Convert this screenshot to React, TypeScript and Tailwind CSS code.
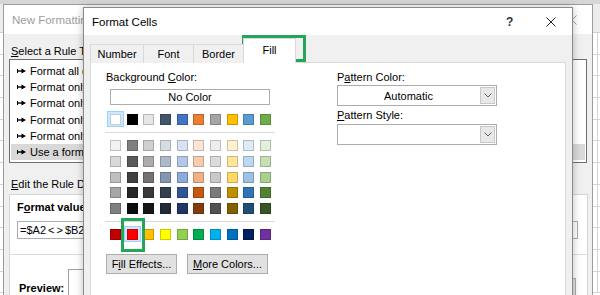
import React from 'react';

const topRow = ['#FFFFFF', '#000000', '#E7E6E6', '#44546A', '#4472C4', '#ED7D31', '#A5A5A5', '#FFC000', '#5B9BD5', '#70AD47'];

const tintRows = [
  ['#F2F2F2', '#808080', '#D0CECE', '#D6DCE4', '#D9E1F2', '#FCE4D6', '#EDEDED', '#FFF2CC', '#DDEBF7', '#E2EFDA'],
  ['#D9D9D9', '#595959', '#AEAAAA', '#ACB9CA', '#B4C6E7', '#F8CBAD', '#DBDBDB', '#FFE699', '#BDD7EE', '#C6E0B4'],
  ['#BFBFBF', '#404040', '#757171', '#8497B0', '#8EA9DB', '#F4B084', '#C9C9C9', '#FFD966', '#9BC2E6', '#A9D08E'],
  ['#A6A6A6', '#262626', '#3A3838', '#333F4F', '#305496', '#C65911', '#7B7B7B', '#BF8F00', '#2F75B5', '#548235'],
  ['#808080', '#0D0D0D', '#171616', '#222B35', '#203764', '#833C0C', '#525252', '#806000', '#1F4E78', '#375623'],
];

const standardRow = ['#C00000', '#FF0000', '#FFC000', '#FFFF00', '#92D050', '#00B050', '#00B0F0', '#0070C0', '#002060', '#7030A0'];

const ruleTypes = [
  'Format all cells based on their values',
  'Format only cells that contain',
  'Format only top or bottom ranked values',
  'Format only values that are above or below average',
  'Format only unique or duplicate values',
  'Use a formula to determine which cells to format',
];

function Swatch({ color, selected }: { color: string; selected?: boolean }) {
  return (
    <div className="relative w-[11px] h-[11px]">
      {selected && <div className="absolute -left-[3px] -top-[3px] w-[17px] h-[16px] bg-[#cce8ff] border border-[#99d1ff]" />}
      <div className="relative w-[11px] h-[11px] border border-black/20" style={{ backgroundColor: color }} />
    </div>
  );
}

function SwatchRow({ colors, selectedIndex }: { colors: string[]; selectedIndex?: number }) {
  return (
    <div className="flex gap-[5.67px]">
      {colors.map((c, i) => (
        <Swatch key={i} color={c} selected={i === selectedIndex} />
      ))}
    </div>
  );
}

function Chevron() {
  return (
    <svg width="8" height="5" viewBox="0 0 8 5" fill="none">
      <path d="M0.5 0.5 L4 4 L7.5 0.5" stroke="#606060" strokeWidth="1" />
    </svg>
  );
}

function Dropdown({ value }: { value?: string }) {
  return (
    <div className="flex h-[21px] w-[160px] border border-[#acacac] bg-white">
      <div className="flex-1 flex items-center justify-center">{value}</div>
      <div className="m-px w-[15px] flex items-center justify-center bg-[#e8e8e8] border border-[#c8c8c8]">
        <Chevron />
      </div>
    </div>
  );
}

function CloseIcon({ color }: { color: string }) {
  return (
    <svg width="10" height="10" viewBox="0 0 10 10" fill="none">
      <path d="M0.5 0.5 L9.5 9.5 M9.5 0.5 L0.5 9.5" stroke={color} strokeWidth="1" />
    </svg>
  );
}

// small "bar + arrow" bullet used by the rule list
function RuleArrow() {
  return (
    <svg width="9" height="6" viewBox="0 0 9 6" className="shrink-0">
      <path d="M0.5 1 V5" stroke="#000" strokeWidth="1" />
      <path d="M0.5 3 H5" stroke="#000" strokeWidth="1.4" />
      <path d="M4.5 0.5 L9 3 L4.5 5.5 Z" fill="#000" />
    </svg>
  );
}

export default function App() {
  return (
    <div className="relative w-[600px] h-[295px] overflow-hidden bg-[#d6d6d6] font-['Liberation_Sans',Arial,sans-serif] text-[11px] text-black leading-[14px]">
      {/* Spreadsheet behind the dialogs */}
      <div className="absolute inset-x-0 top-[4px] bottom-0 flex flex-col bg-white">
        <div className="h-[29px] bg-[#ececec] border-b border-[#d0d0d0]" />
        {Array.from({ length: 12 }).map((_, i) => (
          <div key={i} className="h-[21.7px] shrink-0 border-b border-[#d4d4d4] flex justify-end">
            <div className="w-[3px] border-l border-[#d4d4d4]" />
          </div>
        ))}
      </div>

      {/* New Formatting Rule window (inactive, behind) */}
      <div className="absolute left-[3px] top-[4px] w-[590px] h-[320px] flex flex-col bg-[#f0f0f0] border border-[#9c9c9c]">
        <div className="h-[29px] shrink-0 bg-white flex items-center justify-between pl-[8px] pr-[15px] text-[11.5px] text-[#9e9e9e]">
          <span>New Formatting Rule</span>
          <CloseIcon color="#a0a0a0" />
        </div>
        <div className="flex flex-col px-[5px]">
          <div className="mt-[10px] h-[14px] pl-[2px]">
            <span className="underline">S</span>elect a Rule Type:
          </div>
          <div className="mt-[1px] h-[104px] border border-[#6e6e6e] bg-white pt-[3px] px-px">
            {ruleTypes.map((t, i) => (
              <div
                key={t}
                className={`h-[16.2px] flex items-center gap-[4px] pl-[6px] ${i === 5 ? 'bg-[#d9d9d9]' : ''}`}
              >
                <RuleArrow />
                <span className="whitespace-nowrap">{t}</span>
              </div>
            ))}
          </div>
          <div className="mt-[14px] h-[14px] pl-[2px]">
            <span className="underline">E</span>dit the Rule Description:
          </div>
          <div className="mt-[3px] w-[579px] h-[140px] border border-[#d5d5d5] bg-white flex flex-col">
            <div className="mt-[5px] pl-[7px] h-[14px] font-bold">
              F<span className="underline">o</span>rmat values where this formula is true:
            </div>
            <div className="mt-[7px] ml-[7px] w-[561px] h-[18px] border border-[#abadb3] bg-white flex items-center pl-[2px]">
              =$A2<span className="px-[2px]">&lt;</span><span className="pr-[2px]">&gt;</span>$B2
            </div>
            <div className="mt-[15px] h-px bg-[#dcdcdc]" />
            <div className="mt-[14px] flex items-start">
              <div className="pl-[9px] w-[58px] pt-[12px] font-bold">Preview:</div>
              <div className="w-[420px] h-[42px] border border-[#a0a0a0] bg-white" />
              <div className="ml-[10px] mt-[9px] w-[78px] h-[22px] bg-[#e1e1e1] border border-[#adadad]" />
            </div>
          </div>
        </div>
      </div>

      {/* Format Cells window (active, front) */}
      <div className="absolute left-[83px] top-[7px] w-[490px] h-[300px] flex flex-col bg-[#f0f0f0] border border-[#8a8a8a] shadow-[0_0_8px_rgba(0,0,0,0.25)]">
        <div className="h-[27px] shrink-0 bg-white flex items-center pl-[8px] text-[11.5px]">
          <span className="flex-1">Format Cells</span>
          <span className="w-[8px] text-[12px] font-bold text-[#333]">?</span>
          <div className="ml-[32px] mr-[16px] flex items-center">
            <CloseIcon color="#222" />
          </div>
        </div>

        {/* Tabs */}
        <div className="pl-[6px] pt-[3px] flex items-end h-[27px] shrink-0">
          <div className="relative z-10 flex items-end -mb-px">
            <div className="w-[54px] h-[19px] flex items-center justify-center border border-b-0 border-[#d9d9d9] bg-[#f0f0f0]">Number</div>
            <div className="-ml-px w-[51px] h-[19px] flex items-center justify-center border border-b-0 border-[#d9d9d9] bg-[#f0f0f0]">Font</div>
            <div className="-ml-px w-[51px] h-[19px] flex items-center justify-center border border-b-0 border-[#d9d9d9] bg-[#f0f0f0]">Border</div>
            <div className="-ml-px w-[53px] h-[25px] flex items-center justify-center pb-[2px] border border-b-0 border-[#d9d9d9] bg-white">Fill</div>
          </div>
        </div>

        {/* Fill page */}
        <div className="ml-[6px] w-[476px] flex-1 border border-[#d9d9d9] bg-white flex">
          <div className="w-[246px] pl-[15px] flex flex-col">
            <div className="mt-[7px] h-[14px]">
              Background <span className="underline">C</span>olor:
            </div>
            <div className="mt-[5px] ml-[4px] w-[160px] h-[16px] border border-[#adadad] bg-white flex items-center justify-center">
              No Color
            </div>
            <div className="mt-[9px] ml-[4px]">
              <SwatchRow colors={topRow} selectedIndex={0} />
            </div>
            <div className="mt-[7px] -ml-px w-[170px] h-px bg-[#d9d9d9]" />
            <div className="mt-[7px] ml-[4px] flex flex-col gap-[4.75px]">
              {tintRows.map((row, i) => (
                <SwatchRow key={i} colors={row} />
              ))}
            </div>
            <div className="mt-[7px] -ml-px w-[170px] h-px bg-[#d9d9d9]" />
            <div className="mt-[7px] ml-[4px]">
              <SwatchRow colors={standardRow} selectedIndex={1} />
            </div>
            <div className="mt-[14px] flex gap-[10px]">
              <div className="w-[71px] h-[20px] bg-[#e1e1e1] border border-[#adadad] flex items-center justify-center">
                F<span className="underline">i</span>ll Effects...
              </div>
              <div className="w-[81px] h-[20px] bg-[#e1e1e1] border border-[#adadad] flex items-center justify-center">
                <span className="underline">M</span>ore Colors...
              </div>
            </div>
          </div>
          <div className="w-[160px] flex flex-col">
            <div className="mt-[7px] h-[14px]">
              P<span className="underline">a</span>ttern Color:
            </div>
            <div className="mt-[1px]">
              <Dropdown value="Automatic" />
            </div>
            <div className="mt-[2px] h-[14px]">
              <span className="underline">P</span>attern Style:
            </div>
            <div className="mt-[2px]">
              <Dropdown />
            </div>
          </div>
        </div>

        {/* Green call-out boxes */}
        <div className="absolute left-[158px] top-[27px] w-[64px] h-[27px] border-[3px] border-[#23a55a]" />
        <div className="absolute left-[37px] top-[210px] w-[24px] h-[34px] border-[3px] border-[#23a55a]" />
      </div>
    </div>
  );
}
